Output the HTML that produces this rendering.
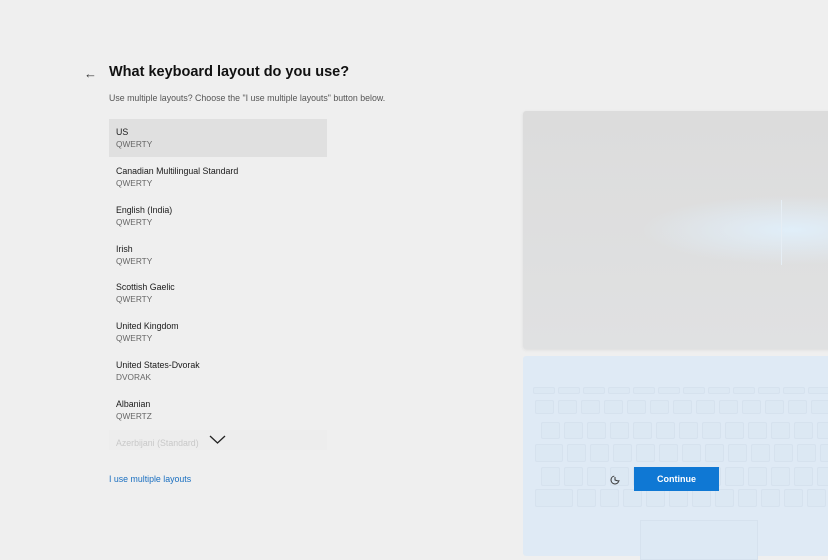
<!DOCTYPE html>
<html><head><style>
*{margin:0;padding:0;box-sizing:border-box}
body{width:828px;height:552px;overflow:hidden;background:#efefef;font-family:"Liberation Sans",sans-serif;position:relative}
.a{position:absolute}
h1{position:absolute;left:109px;top:64px;font-size:14.5px;font-weight:bold;color:#111}
.sub{left:109px;top:93px;font-size:8.8px;color:#555}
.it{position:absolute;left:109px;width:218px;height:38px;padding:7px 0 0 7px;font-size:8.8px;color:#1a1a1a;line-height:12px}
.it span{display:block;color:#666;font-size:8.3px}
.sel{background:#e0e0e0}
.screen{left:523px;top:111px;width:310px;height:238px;background:linear-gradient(180deg,#dcdcdc,#e0e1e2);border-radius:3px;box-shadow:0 1px 3px rgba(0,0,0,.08)}
.kb{left:523px;top:356px;width:310px;height:200px;background:#dfeaf5;border-radius:3px}
.key{position:absolute;background:#dce8f3;border:1px solid #d6e2ee;border-radius:2px}
.btn{left:634px;top:467px;width:85px;height:24px;background:#0f78d4;color:#fff;font-size:9px;font-weight:bold;text-align:center;line-height:24px}
</style></head><body>
<div class="a" style="left:84px;top:66px;font-size:13px;color:#333">←</div>
<h1>What keyboard layout do you use?</h1>
<div class="a sub">Use multiple layouts? Choose the "I use multiple layouts" button below.</div>
<div class="it sel" style="top:119px">US<span>QWERTY</span></div>
<div class="it" style="top:158px">Canadian Multilingual Standard<span>QWERTY</span></div>
<div class="it" style="top:197px">English (India)<span>QWERTY</span></div>
<div class="it" style="top:236px">Irish<span>QWERTY</span></div>
<div class="it" style="top:274px">Scottish Gaelic<span>QWERTY</span></div>
<div class="it" style="top:313px">United Kingdom<span>QWERTY</span></div>
<div class="it" style="top:352px">United States-Dvorak<span>DVORAK</span></div>
<div class="it" style="top:391px">Albanian<span>QWERTZ</span></div>
<div class="it" style="top:430px;color:#c8c8c8;background:#ededed;height:20px">Azerbijani (Standard)</div>
<svg class="a" style="left:209px;top:435px" width="17" height="10"><path d="M1 1 L8.5 8 L16 1" stroke="#222" stroke-width="1.3" fill="none"/></svg>
<div class="a" style="left:109px;top:474px;font-size:8.8px;color:#1a6fc0">I use multiple layouts</div>
<div class="a screen"></div>
<div class="a" style="left:640px;top:195px;width:190px;height:70px;background:radial-gradient(ellipse at 80% 50%,rgba(225,240,252,.9),rgba(220,225,230,0) 70%)"></div>
<div class="a" style="left:781px;top:200px;width:1px;height:65px;background:#e6eef5"></div>
<div class="a kb"></div>
<div id="keys"></div>
<div class="a" style="left:640px;top:520px;width:118px;height:40px;border:1px solid #d6e2ee;background:#dde9f4"></div>
<div class="a btn">Continue</div>
<svg class="a" style="left:609px;top:474px" width="12" height="12"><circle cx="6" cy="6" r="4" stroke="#333" stroke-width="1" fill="none" stroke-dasharray="18 8"/><path d="M6 3V6L9 7" stroke="#333" fill="none"/></svg>
<script>
var k=document.getElementById('keys'),rows=[[400,14],[422,17],[444,18],[467,19],[489,18]];
rows.forEach(function(r,i){var x=535+(i%2)*6;while(x<828){var w=(x<540&&i>0)?(18+i*5):19;k.innerHTML+='<div class="key" style="left:'+x+'px;top:'+r[0]+'px;width:'+w+'px;height:'+r[1]+'px"></div>';x+=w+4;}});
for(var x=533;x<828;x+=25)k.innerHTML+='<div class="key" style="left:'+x+'px;top:387px;width:22px;height:7px"></div>';
</script>
</body></html>
